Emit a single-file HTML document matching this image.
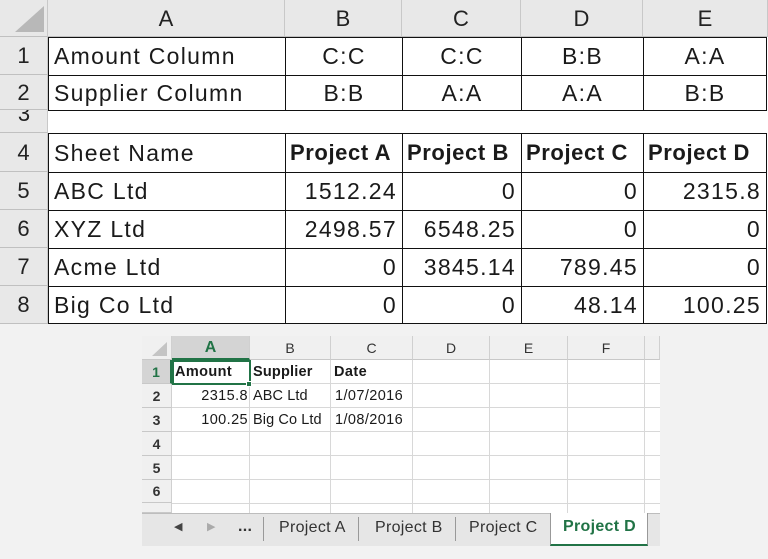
<!DOCTYPE html>
<html><head><meta charset="utf-8"><style>
*{margin:0;padding:0;box-sizing:border-box}
body{width:768px;height:559px;overflow:hidden;background:#f2f2f2;position:relative;font-family:"Liberation Sans",sans-serif;color:#1a1a1a}
.a{position:absolute;white-space:nowrap}
.h{background:#e8e8e8;color:#222;font-size:22px;text-align:center;border-right:1px solid #c8c8c8;border-bottom:1px solid #c0c0c0}
.c{background:#fff;font-size:23px;letter-spacing:1.3px;border:1.5px solid #111;padding:0 5px;line-height:36px}
.r{text-align:right}.m{text-align:center}.b{font-weight:bold;letter-spacing:.6px;font-size:22px}
.sh{background:#f0f0f0;color:#333;font-size:14px;text-align:center;border-right:1px solid #d0d0d0;border-bottom:1px solid #c8c8c8}
.t{font-size:16px;color:#333;letter-spacing:.3px}
.s{font-size:14.5px;letter-spacing:.4px;line-height:23px}
</style></head><body>
<div class="a" style="left:0;top:0;width:768px;height:324px;background:#fff"></div>
<div class="a h" style="left:0;top:0;width:48px;height:37px"><div style="position:absolute;left:15px;top:6px;width:0;height:0;border-left:29px solid transparent;border-bottom:26px solid #b8b8b8"></div></div>
<div class="a h" style="left:48px;top:0;width:237px;height:37px;line-height:37px">A</div>
<div class="a h" style="left:285px;top:0;width:117px;height:37px;line-height:37px">B</div>
<div class="a h" style="left:402px;top:0;width:119px;height:37px;line-height:37px">C</div>
<div class="a h" style="left:521px;top:0;width:122px;height:37px;line-height:37px">D</div>
<div class="a h" style="left:643px;top:0;width:125px;height:37px;line-height:37px">E</div>

<div class="a h" style="left:0;top:37px;width:48px;height:38px;line-height:38px">1</div>
<div class="a h" style="left:0;top:75px;width:48px;height:35px;line-height:35px">2</div>
<div class="a h" style="left:0;top:110px;width:48px;height:23px;overflow:hidden"><div style="position:absolute;left:0;width:48px;top:-8px;line-height:24px">3</div></div>
<div class="a h" style="left:0;top:133px;width:48px;height:39px;line-height:39px">4</div>
<div class="a h" style="left:0;top:172px;width:48px;height:38px;line-height:38px">5</div>
<div class="a h" style="left:0;top:210px;width:48px;height:38px;line-height:38px">6</div>
<div class="a h" style="left:0;top:248px;width:48px;height:38px;line-height:38px">7</div>
<div class="a h" style="left:0;top:286px;width:48px;height:38px;line-height:38px">8</div>

<div class="a c" style="left:48px;top:37px;width:238px;height:39px">Amount Column</div>
<div class="a c m" style="left:285px;top:37px;width:118px;height:39px">C:C</div>
<div class="a c m" style="left:402px;top:37px;width:120px;height:39px">C:C</div>
<div class="a c m" style="left:521px;top:37px;width:123px;height:39px">B:B</div>
<div class="a c m" style="left:643px;top:37px;width:124px;height:39px">A:A</div>
<div class="a c" style="left:48px;top:75px;width:238px;height:36px;line-height:34px">Supplier Column</div>
<div class="a c m" style="left:285px;top:75px;width:118px;height:36px;line-height:34px">B:B</div>
<div class="a c m" style="left:402px;top:75px;width:120px;height:36px;line-height:34px">A:A</div>
<div class="a c m" style="left:521px;top:75px;width:123px;height:36px;line-height:34px">A:A</div>
<div class="a c m" style="left:643px;top:75px;width:124px;height:36px;line-height:34px">B:B</div>

<div class="a c" style="left:48px;top:133px;width:238px;height:40px;line-height:38px">Sheet Name</div>
<div class="a c b" style="left:285px;top:133px;width:118px;height:40px;line-height:38px;padding:0 4px">Project A</div>
<div class="a c b" style="left:402px;top:133px;width:120px;height:40px;line-height:38px;padding:0 4px">Project B</div>
<div class="a c b" style="left:521px;top:133px;width:123px;height:40px;line-height:38px;padding:0 4px">Project C</div>
<div class="a c b" style="left:643px;top:133px;width:124px;height:40px;line-height:38px;padding:0 4px">Project D</div>

<div class="a c" style="left:48px;top:172px;width:238px;height:39px">ABC Ltd</div>
<div class="a c r" style="left:285px;top:172px;width:118px;height:39px">1512.24</div>
<div class="a c r" style="left:402px;top:172px;width:120px;height:39px">0</div>
<div class="a c r" style="left:521px;top:172px;width:123px;height:39px">0</div>
<div class="a c r" style="left:643px;top:172px;width:124px;height:39px">2315.8</div>

<div class="a c" style="left:48px;top:210px;width:238px;height:39px">XYZ Ltd</div>
<div class="a c r" style="left:285px;top:210px;width:118px;height:39px">2498.57</div>
<div class="a c r" style="left:402px;top:210px;width:120px;height:39px">6548.25</div>
<div class="a c r" style="left:521px;top:210px;width:123px;height:39px">0</div>
<div class="a c r" style="left:643px;top:210px;width:124px;height:39px">0</div>

<div class="a c" style="left:48px;top:248px;width:238px;height:39px">Acme Ltd</div>
<div class="a c r" style="left:285px;top:248px;width:118px;height:39px">0</div>
<div class="a c r" style="left:402px;top:248px;width:120px;height:39px">3845.14</div>
<div class="a c r" style="left:521px;top:248px;width:123px;height:39px">789.45</div>
<div class="a c r" style="left:643px;top:248px;width:124px;height:39px">0</div>

<div class="a c" style="left:48px;top:286px;width:238px;height:38px">Big Co Ltd</div>
<div class="a c r" style="left:285px;top:286px;width:118px;height:38px">0</div>
<div class="a c r" style="left:402px;top:286px;width:120px;height:38px">0</div>
<div class="a c r" style="left:521px;top:286px;width:123px;height:38px">48.14</div>
<div class="a c r" style="left:643px;top:286px;width:124px;height:38px">100.25</div>

<div class="a" style="left:142px;top:336px;width:518px;height:177px;background:#fff"></div>
<div class="a sh" style="left:142px;top:336px;width:30px;height:24px"><div style="position:absolute;left:10px;top:6px;width:0;height:0;border-left:15px solid transparent;border-bottom:14px solid #c4c4c4"></div></div>
<div class="a sh" style="left:172px;top:336px;width:78px;height:24px;line-height:24px;background:#d4d4d4;color:#217346;font-weight:bold;border-bottom:2px solid #217346;font-size:16px">A</div>
<div class="a sh" style="left:250px;top:336px;width:81px;height:24px;line-height:24px">B</div>
<div class="a sh" style="left:331px;top:336px;width:82px;height:24px;line-height:24px">C</div>
<div class="a sh" style="left:413px;top:336px;width:77px;height:24px;line-height:24px">D</div>
<div class="a sh" style="left:490px;top:336px;width:78px;height:24px;line-height:24px">E</div>
<div class="a sh" style="left:568px;top:336px;width:77px;height:24px;line-height:24px">F</div>
<div class="a sh" style="left:645px;top:336px;width:15px;height:24px"></div>

<div class="a sh" style="left:142px;top:360px;width:30px;height:24px;line-height:24px;background:#d4d4d4;color:#217346;font-weight:bold;border-right:2px solid #217346">1</div>
<div class="a sh" style="left:142px;top:384px;width:30px;height:24px;line-height:24px;font-weight:bold">2</div>
<div class="a sh" style="left:142px;top:408px;width:30px;height:24px;line-height:24px;font-weight:bold">3</div>
<div class="a sh" style="left:142px;top:432px;width:30px;height:24px;line-height:24px;font-weight:bold">4</div>
<div class="a sh" style="left:142px;top:456px;width:30px;height:24px;line-height:24px;font-weight:bold">5</div>
<div class="a sh" style="left:142px;top:480px;width:30px;height:23px;line-height:23px;font-weight:bold">6</div>
<div class="a sh" style="left:142px;top:503px;width:30px;height:10px"></div>

<div class="a" style="left:172px;top:360px;width:488px;height:153px;background:repeating-linear-gradient(to bottom,transparent 0,transparent 23px,#d8d8d8 23px,#d8d8d8 24px)"></div>
<div class="a" style="left:249px;top:360px;width:1px;height:153px;background:#d8d8d8"></div>
<div class="a" style="left:330px;top:360px;width:1px;height:153px;background:#d8d8d8"></div>
<div class="a" style="left:412px;top:360px;width:1px;height:153px;background:#d8d8d8"></div>
<div class="a" style="left:489px;top:360px;width:1px;height:153px;background:#d8d8d8"></div>
<div class="a" style="left:567px;top:360px;width:1px;height:153px;background:#d8d8d8"></div>
<div class="a" style="left:644px;top:360px;width:1px;height:153px;background:#d8d8d8"></div>

<div class="a" style="left:172px;top:360px;width:79px;height:25px;border:2px solid #217346"></div>
<div class="a" style="left:246px;top:381px;width:6px;height:6px;background:#217346;border:1px solid #fff"></div>
<div class="a s" style="left:175px;top:361px;font-weight:bold">Amount</div>
<div class="a s" style="left:253px;top:361px;font-weight:bold;letter-spacing:.2px">Supplier</div>
<div class="a s" style="left:334px;top:361px;font-weight:bold">Date</div>
<div class="a s" style="left:172px;top:385px;width:76px;text-align:right">2315.8</div>
<div class="a s" style="left:253px;top:385px;letter-spacing:.1px">ABC Ltd</div>
<div class="a s" style="left:335px;top:385px">1/07/2016</div>
<div class="a s" style="left:172px;top:409px;width:76px;text-align:right">100.25</div>
<div class="a s" style="left:253px;top:409px;letter-spacing:.1px">Big Co Ltd</div>
<div class="a s" style="left:335px;top:409px">1/08/2016</div>

<div class="a" style="left:142px;top:513px;width:518px;height:33px;background:#e6e6e6;border-top:1px solid #bdbdbd"></div>
<div class="a t" style="left:174px;top:520px;font-size:11px;color:#444">&#9664;</div>
<div class="a t" style="left:207px;top:520px;font-size:11px;color:#aaa">&#9654;</div>
<div class="a t" style="left:238px;top:518px;font-weight:bold">...</div>
<div class="a" style="left:263px;top:517px;width:1px;height:24px;background:#999"></div>
<div class="a t" style="left:279px;top:519px">Project A</div>
<div class="a" style="left:358px;top:517px;width:1px;height:24px;background:#999"></div>
<div class="a t" style="left:375px;top:519px">Project B</div>
<div class="a" style="left:455px;top:517px;width:1px;height:24px;background:#999"></div>
<div class="a t" style="left:469px;top:519px">Project C</div>
<div class="a" style="left:550px;top:513px;width:98px;height:33px;background:#fff;border-left:1px solid #999;border-right:1px solid #999;border-bottom:2px solid #217346"></div>
<div class="a t" style="left:563px;top:518px;font-weight:bold;color:#217346">Project D</div>
</body></html>
